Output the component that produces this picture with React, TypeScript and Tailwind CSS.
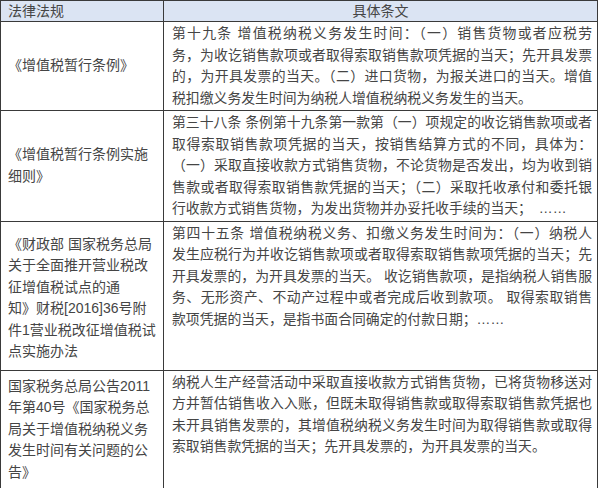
const rows = [
  {
    law: ['《增值税暂行条例》'],
    text: [
      '第十九条 增值税纳税义务发生时间：（一）销售货物或者应税劳',
      '务，为收讫销售款项或者取得索取销售款项凭据的当天；先开具发票',
      '的，为开具发票的当天。（二）进口货物，为报关进口的当天。增值',
    ],
    last: '税扣缴义务发生时间为纳税人增值税纳税义务发生的当天。',
    pad: 'py-px',
  },
  {
    law: ['《增值税暂行条例实施', '细则》'],
    text: [
      '第三十八条 条例第十九条第一款第（一）项规定的收讫销售款项或者',
      '取得索取销售款项凭据的当天，按销售结算方式的不同，具体为：',
      '（一）采取直接收款方式销售货物，不论货物是否发出，均为收到销',
      '售款或者取得索取销售款凭据的当天；（二）采取托收承付和委托银',
    ],
    last: '行收款方式销售货物，为发出货物并办妥托收手续的当天；　……',
    pad: 'py-[2px]',
  },
  {
    law: [
      '《财政部 国家税务总局',
      '关于全面推开营业税改',
      '征增值税试点的通',
      '知》财税[2016]36号附',
      '件1营业税改征增值税试',
      '点实施办法',
    ],
    text: [
      '第四十五条 增值税纳税义务、扣缴义务发生时间为：（一）纳税人',
      '发生应税行为并收讫销售款项或者取得索取销售款项凭据的当天；先',
      '开具发票的，为开具发票的当天。 收讫销售款项，是指纳税人销售服',
      '务、无形资产、不动产过程中或者完成后收到款项。 取得索取销售',
    ],
    last: '款项凭据的当天，是指书面合同确定的付款日期；……',
    pad: 'pt-[12px] pb-[7px]',
  },
  {
    law: [
      '国家税务总局公告2011',
      '年第40号《国家税务总',
      '局关于增值税纳税义务',
      '发生时间有关问题的公',
      '告》',
    ],
    text: [
      '纳税人生产经营活动中采取直接收款方式销售货物，已将货物移送对',
      '方并暂估销售收入入账，但既未取得销售款或取得索取销售款凭据也',
      '未开具销售发票的，其增值税纳税义务发生时间为取得销售款或取得',
    ],
    last: '索取销售款凭据的当天；先开具发票的，为开具发票的当天。',
    pad: 'pt-[5px] pb-[6px]',
  },
]

export default function App() {
  return (
    <div className="w-[600px] h-[488px] bg-white font-['Liberation_Sans','Noto_Sans_CJK_SC',sans-serif] text-[14px] leading-[21.5px] text-[#454545]">
      <table className="w-[598px] border-collapse table-fixed">
        <colgroup>
          <col className="w-[163px]" />
          <col />
        </colgroup>
        <thead>
          <tr className="bg-[#dbe4f3]">
            <th className="border border-[#3a3a3a] pl-[7px] h-[21px] py-0 text-left font-normal leading-[19px]">
              法律法规
            </th>
            <th className="border border-[#3a3a3a] h-[21px] py-0 text-center font-normal leading-[19px]">
              具体条文
            </th>
          </tr>
        </thead>
        <tbody>
          {rows.map((row) => (
            <tr key={row.law[0]}>
              <td className={`border border-[#3a3a3a] pl-[7px] pr-1 align-middle ${row.pad}`}>
                {row.law.map((line) => (
                  <div key={line} className="whitespace-nowrap">
                    {line}
                  </div>
                ))}
              </td>
              <td className="border border-[#3a3a3a] pl-[8px] pr-[5px] py-px align-top text-[13.85px]">
                {row.text.map((line) => (
                  <div key={line} className="whitespace-nowrap text-justify [text-align-last:justify]">
                    {line}
                  </div>
                ))}
                <div className="whitespace-nowrap">{row.last}</div>
              </td>
            </tr>
          ))}
        </tbody>
      </table>
    </div>
  )
}
